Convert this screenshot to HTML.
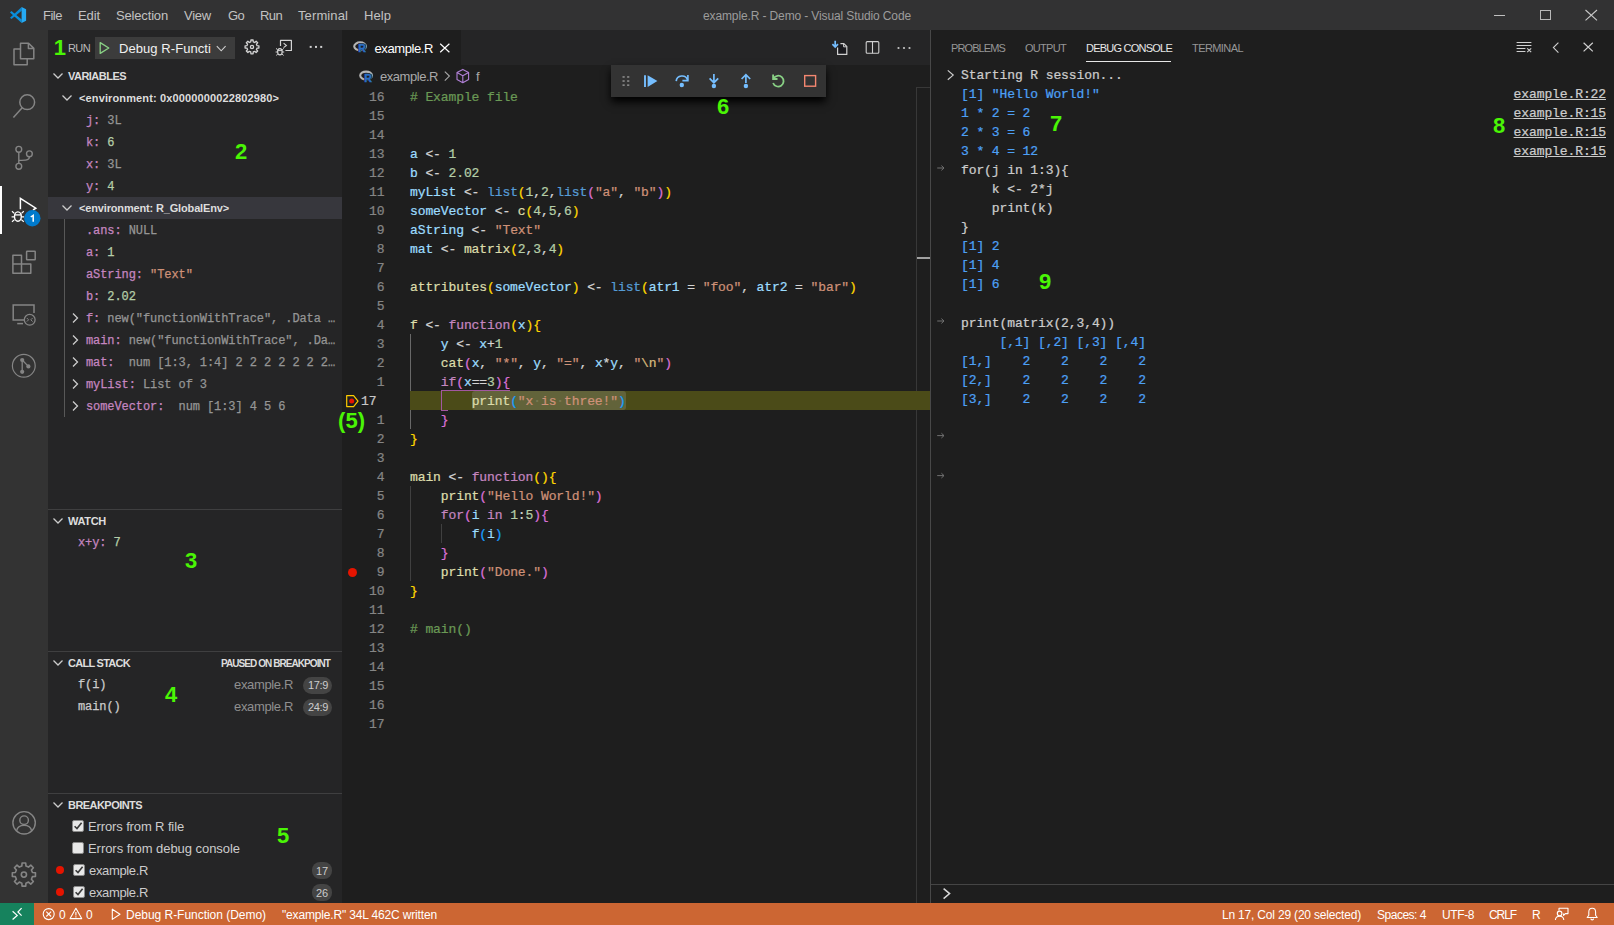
<!DOCTYPE html>
<html><head><meta charset="utf-8"><title>example.R - Demo - Visual Studio Code</title>
<style>

*{box-sizing:border-box;margin:0;padding:0}
html,body{width:1614px;height:925px;overflow:hidden;background:#1e1e1e;font-family:"Liberation Sans",sans-serif;}
.t{position:absolute;white-space:pre;font-family:"Liberation Sans",sans-serif;z-index:5}
.abs{position:absolute}
#title{left:0;top:0;width:1614px;height:30px;background:#323233}
#act{left:0;top:30px;width:48px;height:873px;background:#333333}
#side{left:48px;top:30px;width:294px;height:873px;background:#252526}
#tabs{left:342px;top:30px;width:588px;height:35px;background:#252526}
#tab{left:342px;top:30px;width:119px;height:35px;background:#1e1e1e}
#panel{left:930px;top:30px;width:684px;height:873px;background:#1e1e1e;border-left:1px solid #484848}
#status{left:0;top:903px;width:1614px;height:22px;background:#cc6633}
#remote{left:0;top:903px;width:34px;height:22px;background:#16825d}
.m{-webkit-text-stroke:0.24px;position:absolute;white-space:pre;padding-top:1px;font-family:"Liberation Mono",monospace;font-size:13px;letter-spacing:-0.1px;height:20px;line-height:19px;color:#d4d4d4;z-index:5}
.sm{-webkit-text-stroke:0.25px;position:absolute;white-space:pre;padding-top:1px;font-family:"Liberation Mono",monospace;font-size:12px;letter-spacing:-0.085px;height:23px;line-height:22px;color:#c586c0;z-index:5}
.f{color:#dcdcaa}.e{color:#d7ba7d}.c{color:#6a9955}.k{color:#c586c0}.b{color:#569cd6}.s{color:#ce9178}.n{color:#b5cea8}.v{color:#9cdcfe}
.p1{color:#ffd700}.p2{color:#da70d6}.p3{color:#179fff}
.o{color:#4da0f6}.ws{color:#7a7a55}
.vn{color:#b5cea8}.vs{color:#ce9178}.vd{color:#959595}
.hdr{position:absolute;left:48px;width:294px;height:1px;background:#3f3f40}
svg{position:absolute;overflow:visible}

</style></head><body>
<div class="abs" id="title"></div>
<div class="abs" id="act"></div>
<div class="abs" id="side"></div>
<div class="abs" id="tabs"></div>
<div class="abs" id="tab"></div>
<div class="abs" id="panel"></div>
<div class="abs" id="status"></div>
<div class="abs" id="remote"></div>
<div class="abs" style="left:95px;top:37px;width:140px;height:22px;background:#3c3c3c"></div>
<svg style="left:52.2px;top:70px" width="12" height="12" viewBox="0 0 12 12"><path d="M1.5 3.5 L6 8 L10.5 3.5" fill="none" stroke="#cccccc" stroke-width="1.3"/></svg>
<svg style="left:61px;top:92px" width="12" height="12" viewBox="0 0 12 12"><path d="M1.5 3.5 L6 8 L10.5 3.5" fill="none" stroke="#cccccc" stroke-width="1.3"/></svg>
<div class="abs" style="left:48px;top:197px;width:294px;height:22px;background:#37373d"></div>
<svg style="left:61px;top:202px" width="12" height="12" viewBox="0 0 12 12"><path d="M1.5 3.5 L6 8 L10.5 3.5" fill="none" stroke="#cccccc" stroke-width="1.3"/></svg>
<div class="abs" style="left:64px;top:219px;width:1px;height:198px;background:#585858"></div>
<div class="sm" style="left:86px;top:109px">j: <span class="vd">3L</span></div>
<div class="sm" style="left:86px;top:131px">k: <span class="vn">6</span></div>
<div class="sm" style="left:86px;top:153px">x: <span class="vd">3L</span></div>
<div class="sm" style="left:86px;top:175px">y: <span class="vn">4</span></div>
<div class="sm" style="left:86px;top:219px">.ans: <span class="vd">NULL</span></div>
<div class="sm" style="left:86px;top:241px">a: <span class="vn">1</span></div>
<div class="sm" style="left:86px;top:263px">aString: <span class="vs">&quot;Text&quot;</span></div>
<div class="sm" style="left:86px;top:285px">b: <span class="vn">2.02</span></div>
<div class="sm" style="left:86px;top:307px">f: <span class="vd">new(&quot;functionWithTrace&quot;, .Data …</span></div>
<div class="sm" style="left:86px;top:329px">main: <span class="vd">new(&quot;functionWithTrace&quot;, .Da…</span></div>
<div class="sm" style="left:86px;top:351px">mat: <span class="vd"> num [1:3, 1:4] 2 2 2 2 2 2 2…</span></div>
<div class="sm" style="left:86px;top:373px">myList: <span class="vd">List of 3</span></div>
<div class="sm" style="left:86px;top:395px">someVector: <span class="vd"> num [1:3] 4 5 6</span></div>
<svg style="left:69px;top:312px" width="12" height="12" viewBox="0 0 12 12"><path d="M4 1.5 L8.5 6 L4 10.5" fill="none" stroke="#cccccc" stroke-width="1.3"/></svg>
<svg style="left:69px;top:334px" width="12" height="12" viewBox="0 0 12 12"><path d="M4 1.5 L8.5 6 L4 10.5" fill="none" stroke="#cccccc" stroke-width="1.3"/></svg>
<svg style="left:69px;top:356px" width="12" height="12" viewBox="0 0 12 12"><path d="M4 1.5 L8.5 6 L4 10.5" fill="none" stroke="#cccccc" stroke-width="1.3"/></svg>
<svg style="left:69px;top:378px" width="12" height="12" viewBox="0 0 12 12"><path d="M4 1.5 L8.5 6 L4 10.5" fill="none" stroke="#cccccc" stroke-width="1.3"/></svg>
<svg style="left:69px;top:400px" width="12" height="12" viewBox="0 0 12 12"><path d="M4 1.5 L8.5 6 L4 10.5" fill="none" stroke="#cccccc" stroke-width="1.3"/></svg>
<div class="hdr" style="top:509px"></div>
<svg style="left:52.2px;top:515px" width="12" height="12" viewBox="0 0 12 12"><path d="M1.5 3.5 L6 8 L10.5 3.5" fill="none" stroke="#cccccc" stroke-width="1.3"/></svg>
<div class="sm" style="left:78px;top:531px">x+y: <span class="vn">7</span></div>
<div class="hdr" style="top:651px"></div>
<svg style="left:52.2px;top:657px" width="12" height="12" viewBox="0 0 12 12"><path d="M1.5 3.5 L6 8 L10.5 3.5" fill="none" stroke="#cccccc" stroke-width="1.3"/></svg>
<div class="sm" style="left:78px;top:673px;color:#cccccc">f(i)</div>
<div class="sm" style="left:78px;top:695px;color:#cccccc">main()</div>
<div class="abs" style="left:303px;top:676.5px;width:29px;height:17px;border-radius:8.5px;background:#444444"></div>
<div class="abs" style="left:303px;top:698.5px;width:29px;height:17px;border-radius:8.5px;background:#444444"></div>
<div class="hdr" style="top:793px"></div>
<svg style="left:52.2px;top:799px" width="12" height="12" viewBox="0 0 12 12"><path d="M1.5 3.5 L6 8 L10.5 3.5" fill="none" stroke="#cccccc" stroke-width="1.3"/></svg>
<div class="abs" style="left:72px;top:820px;width:12px;height:12px;background:#e8e8e8;border:1px solid #8a8a8a;border-radius:2px"></div>
<svg style="left:72px;top:820px" width="12" height="12" viewBox="0 0 12 12"><path d="M2.6 6.2 L5 8.6 L9.6 2.8" fill="none" stroke="#3a3a3a" stroke-width="1.6"/></svg>
<div class="abs" style="left:72px;top:842px;width:12px;height:12px;background:#e8e8e8;border:1px solid #8a8a8a;border-radius:2px"></div>
<div class="abs" style="left:55.5px;top:865.8px;width:8.6px;height:8.6px;border-radius:5px;background:#e51400"></div>
<div class="abs" style="left:73px;top:864px;width:12px;height:12px;background:#e8e8e8;border:1px solid #8a8a8a;border-radius:2px"></div>
<svg style="left:73px;top:864px" width="12" height="12" viewBox="0 0 12 12"><path d="M2.6 6.2 L5 8.6 L9.6 2.8" fill="none" stroke="#3a3a3a" stroke-width="1.6"/></svg>
<div class="abs" style="left:312px;top:862px;width:20px;height:17px;border-radius:8px;background:#444444"></div>
<div class="abs" style="left:55.5px;top:887.8px;width:8.6px;height:8.6px;border-radius:5px;background:#e51400"></div>
<div class="abs" style="left:73px;top:886px;width:12px;height:12px;background:#e8e8e8;border:1px solid #8a8a8a;border-radius:2px"></div>
<svg style="left:73px;top:886px" width="12" height="12" viewBox="0 0 12 12"><path d="M2.6 6.2 L5 8.6 L9.6 2.8" fill="none" stroke="#3a3a3a" stroke-width="1.6"/></svg>
<div class="abs" style="left:312px;top:884px;width:20px;height:17px;border-radius:8px;background:#444444"></div>
<div class="abs" style="left:410px;top:391px;width:520px;height:19px;background:#4b4b18;z-index:2"></div>
<div class="abs" style="left:472px;top:391px;width:154px;height:19px;background:#62633a;border-radius:3px;z-index:2"></div>
<div class="m" style="left:346px;top:87px;width:38.5px;text-align:right;color:#858585">16</div>
<div class="m" style="left:410px;top:87px"><span class="c"># Example file</span></div>
<div class="m" style="left:346px;top:106px;width:38.5px;text-align:right;color:#858585">15</div>
<div class="m" style="left:346px;top:125px;width:38.5px;text-align:right;color:#858585">14</div>
<div class="m" style="left:346px;top:144px;width:38.5px;text-align:right;color:#858585">13</div>
<div class="m" style="left:410px;top:144px"><span class="v">a</span> &lt;- <span class="n">1</span></div>
<div class="m" style="left:346px;top:163px;width:38.5px;text-align:right;color:#858585">12</div>
<div class="m" style="left:410px;top:163px"><span class="v">b</span> &lt;- <span class="n">2.02</span></div>
<div class="m" style="left:346px;top:182px;width:38.5px;text-align:right;color:#858585">11</div>
<div class="m" style="left:410px;top:182px"><span class="v">myList</span> &lt;- <span class="b">list</span><span class="p1">(</span><span class="n">1</span>,<span class="n">2</span>,<span class="b">list</span><span class="p2">(</span><span class="s">&quot;a&quot;</span>, <span class="s">&quot;b&quot;</span><span class="p2">)</span><span class="p1">)</span></div>
<div class="m" style="left:346px;top:201px;width:38.5px;text-align:right;color:#858585">10</div>
<div class="m" style="left:410px;top:201px"><span class="v">someVector</span> &lt;- <span class="f">c</span><span class="p1">(</span><span class="n">4</span>,<span class="n">5</span>,<span class="n">6</span><span class="p1">)</span></div>
<div class="m" style="left:346px;top:220px;width:38.5px;text-align:right;color:#858585">9</div>
<div class="m" style="left:410px;top:220px"><span class="v">aString</span> &lt;- <span class="s">&quot;Text&quot;</span></div>
<div class="m" style="left:346px;top:239px;width:38.5px;text-align:right;color:#858585">8</div>
<div class="m" style="left:410px;top:239px"><span class="v">mat</span> &lt;- <span class="f">matrix</span><span class="p1">(</span><span class="n">2</span>,<span class="n">3</span>,<span class="n">4</span><span class="p1">)</span></div>
<div class="m" style="left:346px;top:258px;width:38.5px;text-align:right;color:#858585">7</div>
<div class="m" style="left:346px;top:277px;width:38.5px;text-align:right;color:#858585">6</div>
<div class="m" style="left:410px;top:277px"><span class="f">attributes</span><span class="p1">(</span><span class="v">someVector</span><span class="p1">)</span> &lt;- <span class="b">list</span><span class="p1">(</span><span class="v">atr1</span> = <span class="s">&quot;foo&quot;</span>, <span class="v">atr2</span> = <span class="s">&quot;bar&quot;</span><span class="p1">)</span></div>
<div class="m" style="left:346px;top:296px;width:38.5px;text-align:right;color:#858585">5</div>
<div class="m" style="left:346px;top:315px;width:38.5px;text-align:right;color:#858585">4</div>
<div class="m" style="left:410px;top:315px"><span class="f">f</span> &lt;- <span class="k">function</span><span class="p1">(</span><span class="v">x</span><span class="p1">)</span><span class="p1">{</span></div>
<div class="m" style="left:346px;top:334px;width:38.5px;text-align:right;color:#858585">3</div>
<div class="m" style="left:410px;top:334px">    <span class="v">y</span> &lt;- <span class="v">x</span>+<span class="n">1</span></div>
<div class="m" style="left:346px;top:353px;width:38.5px;text-align:right;color:#858585">2</div>
<div class="m" style="left:410px;top:353px">    <span class="f">cat</span><span class="p2">(</span><span class="v">x</span>, <span class="s">&quot;*&quot;</span>, <span class="v">y</span>, <span class="s">&quot;=&quot;</span>, <span class="v">x</span>*<span class="v">y</span>, <span class="s">&quot;</span><span class="e">\n</span><span class="s">&quot;</span><span class="p2">)</span></div>
<div class="m" style="left:346px;top:372px;width:38.5px;text-align:right;color:#858585">1</div>
<div class="m" style="left:410px;top:372px">    <span class="k">if</span><span class="p2">(</span><span class="v">x</span>==<span class="n">3</span><span class="p2">)</span><span class="p2">{</span></div>
<div class="m" style="left:361px;top:391px;color:#c6c6c6">17</div>
<div class="m" style="left:410px;top:391px">        <span class="f">print</span><span class="p3">(</span><span class="s">&quot;x</span><span class="ws">·</span><span class="s">is</span><span class="ws">·</span><span class="s">three!&quot;</span><span class="p3">)</span></div>
<div class="m" style="left:346px;top:410px;width:38.5px;text-align:right;color:#858585">1</div>
<div class="m" style="left:410px;top:410px">    <span class="p2">}</span></div>
<div class="m" style="left:346px;top:429px;width:38.5px;text-align:right;color:#858585">2</div>
<div class="m" style="left:410px;top:429px"><span class="p1">}</span></div>
<div class="m" style="left:346px;top:448px;width:38.5px;text-align:right;color:#858585">3</div>
<div class="m" style="left:346px;top:467px;width:38.5px;text-align:right;color:#858585">4</div>
<div class="m" style="left:410px;top:467px"><span class="f">main</span> &lt;- <span class="k">function</span><span class="p1">(</span><span class="p1">)</span><span class="p1">{</span></div>
<div class="m" style="left:346px;top:486px;width:38.5px;text-align:right;color:#858585">5</div>
<div class="m" style="left:410px;top:486px">    <span class="f">print</span><span class="p2">(</span><span class="s">&quot;Hello World!&quot;</span><span class="p2">)</span></div>
<div class="m" style="left:346px;top:505px;width:38.5px;text-align:right;color:#858585">6</div>
<div class="m" style="left:410px;top:505px">    <span class="k">for</span><span class="p2">(</span><span class="v">i</span> <span class="k">in</span> <span class="n">1</span>:<span class="n">5</span><span class="p2">)</span><span class="p2">{</span></div>
<div class="m" style="left:346px;top:524px;width:38.5px;text-align:right;color:#858585">7</div>
<div class="m" style="left:410px;top:524px">        <span class="v">f</span><span class="p3">(</span><span class="v">i</span><span class="p3">)</span></div>
<div class="m" style="left:346px;top:543px;width:38.5px;text-align:right;color:#858585">8</div>
<div class="m" style="left:410px;top:543px">    <span class="p2">}</span></div>
<div class="m" style="left:346px;top:562px;width:38.5px;text-align:right;color:#858585">9</div>
<div class="m" style="left:410px;top:562px">    <span class="f">print</span><span class="p2">(</span><span class="s">&quot;Done.&quot;</span><span class="p2">)</span></div>
<div class="m" style="left:346px;top:581px;width:38.5px;text-align:right;color:#858585">10</div>
<div class="m" style="left:410px;top:581px"><span class="p1">}</span></div>
<div class="m" style="left:346px;top:600px;width:38.5px;text-align:right;color:#858585">11</div>
<div class="m" style="left:346px;top:619px;width:38.5px;text-align:right;color:#858585">12</div>
<div class="m" style="left:410px;top:619px"><span class="c"># main()</span></div>
<div class="m" style="left:346px;top:638px;width:38.5px;text-align:right;color:#858585">13</div>
<div class="m" style="left:346px;top:657px;width:38.5px;text-align:right;color:#858585">14</div>
<div class="m" style="left:346px;top:676px;width:38.5px;text-align:right;color:#858585">15</div>
<div class="m" style="left:346px;top:695px;width:38.5px;text-align:right;color:#858585">16</div>
<div class="m" style="left:346px;top:714px;width:38.5px;text-align:right;color:#858585">17</div>
<div class="abs" style="left:410px;top:334px;width:1px;height:95px;background:#686868"></div>
<div class="abs" style="left:410px;top:486px;width:1px;height:95px;background:#404040"></div>
<div class="abs" style="left:441px;top:524px;width:1px;height:19px;background:#404040"></div>
<div class="abs" style="left:441px;top:390px;width:69px;height:1px;background:#a257a0;z-index:3"></div>
<div class="abs" style="left:441px;top:390px;width:1px;height:20px;background:#a257a0;z-index:3"></div>
<div class="abs" style="left:441px;top:410px;width:7px;height:1px;background:#a257a0;z-index:3"></div>
<div class="abs" style="left:347.5px;top:567.5px;width:9px;height:9px;border-radius:5px;background:#e51400"></div>
<div class="abs" style="left:916px;top:87px;width:1px;height:816px;background:#383838"></div>
<div class="abs" style="left:916px;top:87px;width:14px;height:1px;background:#383838"></div>
<div class="abs" style="left:917px;top:257px;width:13px;height:2px;background:#a0a0a0"></div>
<div class="abs" style="left:611px;top:65px;width:215px;height:32px;background:#333333;box-shadow:0 5px 8px #000"></div>
<div class="abs" style="left:1086px;top:61px;width:85px;height:1px;background:#e7e7e7"></div>
<div class="m " style="left:961px;top:65px;color:#cccccc">Starting R session...</div>
<div class="m o" style="left:961px;top:84px">[1] &quot;Hello World!&quot;</div>
<div class="m o" style="left:961px;top:103px">1 * 2 = 2</div>
<div class="m o" style="left:961px;top:122px">2 * 3 = 6</div>
<div class="m o" style="left:961px;top:141px">3 * 4 = 12</div>
<div class="m " style="left:961px;top:160px;color:#cccccc">for(j in 1:3){</div>
<div class="m " style="left:961px;top:179px;color:#cccccc">    k &lt;- 2*j</div>
<div class="m " style="left:961px;top:198px;color:#cccccc">    print(k)</div>
<div class="m " style="left:961px;top:217px;color:#cccccc">}</div>
<div class="m o" style="left:961px;top:236px">[1] 2</div>
<div class="m o" style="left:961px;top:255px">[1] 4</div>
<div class="m o" style="left:961px;top:274px">[1] 6</div>
<div class="m " style="left:961px;top:313px;color:#cccccc">print(matrix(2,3,4))</div>
<div class="m o" style="left:961px;top:332px">     [,1] [,2] [,3] [,4]</div>
<div class="m o" style="left:961px;top:351px">[1,]    2    2    2    2</div>
<div class="m o" style="left:961px;top:370px">[2,]    2    2    2    2</div>
<div class="m o" style="left:961px;top:389px">[3,]    2    2    2    2</div>
<div class="m" style="left:1506px;width:100px;text-align:right;top:84px;color:#cccccc;text-decoration:underline">example.R:22</div>
<div class="m" style="left:1506px;width:100px;text-align:right;top:103px;color:#cccccc;text-decoration:underline">example.R:15</div>
<div class="m" style="left:1506px;width:100px;text-align:right;top:122px;color:#cccccc;text-decoration:underline">example.R:15</div>
<div class="m" style="left:1506px;width:100px;text-align:right;top:141px;color:#cccccc;text-decoration:underline">example.R:15</div>
<div class="abs" style="left:931px;top:884px;width:683px;height:1px;background:#454545"></div>
<svg class="ov" style="left:0;top:0;z-index:6" width="1614" height="925" viewBox="0 0 1614 925"><path d="M21.7 7.1 L21.7 10.7 L11.5 19.1 L10 17.7 Z" stroke="none" fill="#078bd8" stroke-width="1.2" />
<path d="M11.4 11 L21.7 19.4 L21.7 23.1 L10 12.4 Z" stroke="none" fill="#0a90de" stroke-width="1.2" />
<path d="M21.6 7.1 L26.1 9.2 V20.8 L21.6 23.1 Z" stroke="none" fill="#25a9f3" stroke-width="1.2" />
<path d="M1494 15.5 H1505" stroke="#c0c0c0" fill="none" stroke-width="1" />
<rect x="1540.5" y="10.5" width="10" height="9" rx="0" stroke="#b8b8b8" fill="none" stroke-width="1" />
<path d="M1585.5 10 L1597 20.3 M1597 10 L1585.5 20.3" stroke="#c8c8c8" fill="none" stroke-width="1.1" />
<path d="M20.5 43.2 H28.6 L33.8 48.4 V58.8 H20.5 Z M28.4 43.4 V48.6 H33.6" stroke="#858585" fill="none" stroke-width="1.5" stroke-linejoin="round"/>
<path d="M20.3 49 H14 V64.8 H27.2 V59" stroke="#858585" fill="none" stroke-width="1.5" stroke-linejoin="round"/>
<circle cx="27.2" cy="102.2" r="7.4" stroke="#858585" fill="none" stroke-width="1.5" />
<path d="M22.2 107.8 L13.4 117.6" stroke="#858585" fill="none" stroke-width="1.5" />
<circle cx="18.8" cy="149.3" r="2.9" stroke="#858585" fill="none" stroke-width="1.4" />
<circle cx="18.8" cy="166.3" r="2.9" stroke="#858585" fill="none" stroke-width="1.4" />
<circle cx="29.4" cy="153.8" r="2.9" stroke="#858585" fill="none" stroke-width="1.4" />
<path d="M18.8 152.2 V163.4 M29.4 156.7 C29.4 160.4 25.5 160.4 18.8 160.4" stroke="#858585" fill="none" stroke-width="1.4" />
<rect x="0" y="186" width="2" height="48" rx="0" stroke="none" fill="#ffffff" stroke-width="1.2" />
<path d="M20.4 209.2 V198.4 L35.8 208.2 L33 210" stroke="#ffffff" fill="none" stroke-width="1.5" stroke-linejoin="miter"/>
<ellipse cx="17.9" cy="216.6" rx="3.4" ry="4.7" stroke="#fff" fill="none" stroke-width="1.4"/>
<path d="M14.4 214.9 H21.4" stroke="#fff" fill="none" stroke-width="1.3" />
<path d="M14.3 213.4 L12 211.2 M21.5 213.4 L23.8 211.2 M14 216.8 H11.6 M21.8 216.8 H24.2 M14.5 219.6 L12 221.8 M21.3 219.6 L23.8 221.8" stroke="#fff" fill="none" stroke-width="1.2" />
<circle cx="32.3" cy="218.2" r="8.2" stroke="none" fill="#007acc" stroke-width="1.2" />
<path d="M30.7 217 L33.2 215.3 V221.8" stroke="#ffffff" fill="none" stroke-width="1.5" stroke-linejoin="miter"/>
<path d="M12.9 255.3 H21.5 V264 H30.8 V273.2 H12.9 Z M12.9 264 H21.5 V273.2" stroke="#858585" fill="none" stroke-width="1.5" stroke-linejoin="round"/>
<rect x="26.6" y="251.2" width="8.6" height="8.6" rx="0.5" stroke="#858585" fill="none" stroke-width="1.5" />
<path d="M24 320 H13.2 V305 H34 V313" stroke="#858585" fill="none" stroke-width="1.5" />
<path d="M17.2 323.6 H23" stroke="#858585" fill="none" stroke-width="1.5" />
<circle cx="29.7" cy="319.8" r="5.4" stroke="#858585" fill="#333333" stroke-width="1.3" />
<path d="M26.8 318 L28.6 319.8 L26.8 321.6 M32.6 318 L30.8 319.8 L32.6 321.6" stroke="#858585" fill="none" stroke-width="1" />
<circle cx="23.8" cy="365.8" r="11.4" stroke="#858585" fill="none" stroke-width="1.2" />
<circle cx="22.2" cy="360" r="2.1" stroke="none" fill="#858585" stroke-width="1.2" />
<circle cx="28.4" cy="366.4" r="2.1" stroke="none" fill="#858585" stroke-width="1.2" />
<circle cx="22.2" cy="371.8" r="2.1" stroke="none" fill="#858585" stroke-width="1.2" />
<path d="M22.2 360 V371.8 M22.2 360 L28.4 366.4" stroke="#858585" fill="none" stroke-width="1.3" />
<circle cx="24.1" cy="822.8" r="11.2" stroke="#858585" fill="none" stroke-width="1.4" />
<circle cx="24.1" cy="820.2" r="4.3" stroke="#858585" fill="none" stroke-width="1.4" />
<path d="M16.6 830.8 C17.4 826.6 20.5 825.4 24.1 825.4 C27.7 825.4 30.8 826.6 31.6 830.8" stroke="#858585" fill="none" stroke-width="1.4" />
<path d="M21.85 866.04 L22.07 863.04 L25.73 863.04 L25.95 866.04 L28.50 867.10 L30.78 865.13 L33.37 867.72 L31.40 870.00 L32.46 872.55 L35.46 872.77 L35.46 876.43 L32.46 876.65 L31.40 879.20 L33.37 881.48 L30.78 884.07 L28.50 882.10 L25.95 883.16 L25.73 886.16 L22.07 886.16 L21.85 883.16 L19.30 882.10 L17.02 884.07 L14.43 881.48 L16.40 879.20 L15.34 876.65 L12.34 876.43 L12.34 872.77 L15.34 872.55 L16.40 870.00 L14.43 867.72 L17.02 865.13 L19.30 867.10 Z" stroke="#858585" fill="none" stroke-width="1.6" stroke-linejoin="round"/>
<circle cx="23.9" cy="874.6" r="2.6" stroke="#858585" fill="none" stroke-width="1.6" />
<path d="M12.6 911.3 L17.2 915.4 L12.6 919.5 M21.6 908.1 L17.9 912 L21.6 915.7" stroke="#ffffff" fill="none" stroke-width="1.2" />
<circle cx="48.7" cy="914.1" r="5.5" stroke="#ffffff" fill="none" stroke-width="1.1" />
<path d="M46.3 911.7 L51.1 916.5 M51.1 911.7 L46.3 916.5" stroke="#ffffff" fill="none" stroke-width="1.1" />
<path d="M75.9 908.3 L81.7 918.6 H70.1 Z" stroke="#ffffff" fill="none" stroke-width="1.1" stroke-linejoin="round"/>
<path d="M75.9 912 V915.4 M75.9 916.3 V917.5" stroke="#ffffff" fill="none" stroke-width="1.1" />
<path d="M112.3 909.2 V919.4 L120 914.3 Z" stroke="#ffffff" fill="none" stroke-width="1.1" stroke-linejoin="round"/>
<circle cx="1559.6" cy="913.4" r="2.3" stroke="#ffffff" fill="none" stroke-width="1.1" />
<path d="M1555.4 920 C1555.6 917 1557.4 916.2 1559.6 916.2 C1561.8 916.2 1563.6 917 1563.8 920" stroke="#ffffff" fill="none" stroke-width="1.1" />
<path d="M1559 910.4 V908.2 H1568 V913.6 H1565.4 L1563.6 915.4 V913.6" stroke="#ffffff" fill="none" stroke-width="1.1" stroke-linejoin="round"/>
<path d="M1587.2 917.5 L1588.8 915.2 V912 C1588.8 906.9 1595.6 906.9 1595.6 912 V915.2 L1597.2 917.5 Z M1590.8 918.6 C1591 920.3 1593.4 920.3 1593.6 918.6" stroke="#ffffff" fill="none" stroke-width="1.1" stroke-linejoin="round"/>
<path d="M100.2 42.6 V53.4 L108.8 48 Z" stroke="#89d185" fill="none" stroke-width="1.3" stroke-linejoin="round"/>
<path d="M216.8 46.2 L221.2 50.8 L225.6 46.2" stroke="#d0d0d0" fill="none" stroke-width="1.1" />
<path d="M250.79 41.84 L250.90 39.99 L253.10 39.99 L253.21 41.84 L254.72 42.47 L256.11 41.24 L257.66 42.79 L256.43 44.18 L257.06 45.69 L258.91 45.80 L258.91 48.00 L257.06 48.11 L256.43 49.62 L257.66 51.01 L256.11 52.56 L254.72 51.33 L253.21 51.96 L253.10 53.81 L250.90 53.81 L250.79 51.96 L249.28 51.33 L247.89 52.56 L246.34 51.01 L247.57 49.62 L246.94 48.11 L245.09 48.00 L245.09 45.80 L246.94 45.69 L247.57 44.18 L246.34 42.79 L247.89 41.24 L249.28 42.47 Z" stroke="#d4d4d4" fill="none" stroke-width="1.3" stroke-linejoin="round"/>
<circle cx="252" cy="46.9" r="1.6" stroke="#d4d4d4" fill="none" stroke-width="1.3" />
<path d="M280.5 46 V40.4 H291.4 V50.5 H285.4" stroke="#d4d4d4" fill="none" stroke-width="1.2" stroke-linejoin="round"/>
<path d="M283.6 43.2 L286.4 45.4 L283.6 47.6" stroke="#d4d4d4" fill="none" stroke-width="1.1" />
<ellipse cx="279.9" cy="51.8" rx="2.3" ry="3.1" stroke="#d4d4d4" fill="#252526" stroke-width="1.2"/><path d="M277.7 50.6 H282.1" stroke="#d4d4d4" stroke-width="1"/>
<path d="M277.6 49.8 L276 48.4 M282.2 49.8 L283.8 48.4 M277.4 52 H275.6 M282.4 52 H284.2 M277.8 54 L276.2 55.4 M282 54 L283.6 55.4" stroke="#d4d4d4" fill="none" stroke-width="1" />
<rect x="309.7" y="45.9" width="2" height="2" rx="0" stroke="none" fill="#d0d0d0" stroke-width="1.2" />
<rect x="315" y="45.9" width="2" height="2" rx="0" stroke="none" fill="#d0d0d0" stroke-width="1.2" />
<rect x="320.2" y="45.9" width="2" height="2" rx="0" stroke="none" fill="#d0d0d0" stroke-width="1.2" />
<ellipse cx="360.1" cy="46.3" rx="5.9" ry="3.9" stroke="#b4b4b4" fill="none" stroke-width="2.1"/>
<text x="358.3" y="52.3" font-family="Liberation Sans, sans-serif" font-size="10.6" font-weight="bold" fill="#1e1e1e" stroke="#1e1e1e" stroke-width="1.6">R</text>
<text x="358.3" y="52.3" font-family="Liberation Sans, sans-serif" font-size="10.6" font-weight="bold" fill="#2a6fc4" stroke="#2a6fc4" stroke-width="0.5">R</text>
<ellipse cx="366.1" cy="75.5" rx="5.9" ry="3.9" stroke="#b4b4b4" fill="none" stroke-width="2.1"/>
<text x="364.3" y="81.5" font-family="Liberation Sans, sans-serif" font-size="10.6" font-weight="bold" fill="#1e1e1e" stroke="#1e1e1e" stroke-width="1.6">R</text>
<text x="364.3" y="81.5" font-family="Liberation Sans, sans-serif" font-size="10.6" font-weight="bold" fill="#2a6fc4" stroke="#2a6fc4" stroke-width="0.5">R</text>
<path d="M440.2 43.8 L449.4 52.2 M449.4 43.8 L440.2 52.2" stroke="#ffffff" fill="none" stroke-width="1.2" />
<path d="M444.8 71.6 L449.4 76.1 L444.8 80.6" stroke="#a9a9a9" fill="none" stroke-width="1.1" />
<path d="M462.8 69.4 L468.6 72.6 V79.6 L462.8 82.8 L457 79.6 V72.6 Z M457 72.6 L462.8 75.8 L468.6 72.6 M462.8 75.8 V82.8" stroke="#b180d7" fill="none" stroke-width="1.1" stroke-linejoin="round"/>
<path d="M837.6 47.4 V54.4 H846.8 V46.6 L843.8 43.6 H840.4" stroke="#d0d0d0" fill="#1a1a1e" stroke-width="1.2" />
<path d="M843.6 43.8 V46.8 H846.6" stroke="#d0d0d0" fill="none" stroke-width="1" />
<path d="M835.2 40.8 V46.8 M832.4 44.2 L835.2 47 L838 44.2" stroke="#75beff" fill="none" stroke-width="1.7" />
<rect x="866.2" y="41.6" width="12.6" height="11.6" rx="1" stroke="#d0d0d0" fill="none" stroke-width="1.1" />
<path d="M872.5 41.6 V53.2" stroke="#d0d0d0" fill="none" stroke-width="1.1" />
<circle cx="898.5" cy="48" r="1.1" stroke="none" fill="#c5c5c5" stroke-width="1.2" />
<circle cx="904" cy="48" r="1.1" stroke="none" fill="#c5c5c5" stroke-width="1.2" />
<circle cx="909.5" cy="48" r="1.1" stroke="none" fill="#c5c5c5" stroke-width="1.2" />
<rect x="622.5" y="76.1" width="2.2" height="1.7" rx="0" stroke="none" fill="#858585" stroke-width="1.2" />
<rect x="622.5" y="80.19999999999999" width="2.2" height="1.7" rx="0" stroke="none" fill="#858585" stroke-width="1.2" />
<rect x="622.5" y="84.3" width="2.2" height="1.7" rx="0" stroke="none" fill="#858585" stroke-width="1.2" />
<rect x="627.1" y="76.1" width="2.2" height="1.7" rx="0" stroke="none" fill="#858585" stroke-width="1.2" />
<rect x="627.1" y="80.19999999999999" width="2.2" height="1.7" rx="0" stroke="none" fill="#858585" stroke-width="1.2" />
<rect x="627.1" y="84.3" width="2.2" height="1.7" rx="0" stroke="none" fill="#858585" stroke-width="1.2" />
<path d="M645 75.2 V87" stroke="#75beff" fill="none" stroke-width="1.9" />
<path d="M647.6 75.2 L657.4 81.1 L647.6 87 Z" stroke="none" fill="#75beff" stroke-width="1.2" />
<path d="M676.2 81.2 C676.8 74.8 685.8 74.2 687.6 80" stroke="#75beff" fill="none" stroke-width="1.7" />
<path d="M687.9 75 V80.6 H682.4" stroke="#75beff" fill="none" stroke-width="1.6" />
<circle cx="681.8" cy="85" r="2.2" stroke="none" fill="#75beff" stroke-width="1.2" />
<path d="M713.9 74 V82.4 M709.6 78.4 L713.9 82.7 L718.2 78.4" stroke="#75beff" fill="none" stroke-width="1.7" />
<circle cx="713.9" cy="86" r="2.2" stroke="none" fill="#75beff" stroke-width="1.2" />
<path d="M745.9 83 V74.8 M741.6 79 L745.9 74.7 L750.2 79" stroke="#75beff" fill="none" stroke-width="1.7" />
<circle cx="745.9" cy="86" r="2.2" stroke="none" fill="#75beff" stroke-width="1.2" />
<path d="M773.5 78.4 A5.4 5.4 0 1 1 773.1 83" stroke="#89d185" fill="none" stroke-width="1.8" />
<path d="M773.1 74.6 V79 H777.5" stroke="#89d185" fill="none" stroke-width="1.8" />
<rect x="804.7" y="75.6" width="10.9" height="10.6" rx="0" stroke="#f48771" fill="none" stroke-width="1.4" />
<path d="M346.7 395.6 H353.6 L358 401.1 L353.6 406.6 H346.7 Z" stroke="#ffcc00" fill="none" stroke-width="1.2" stroke-linejoin="round"/>
<circle cx="351.7" cy="401.1" r="2.5" stroke="none" fill="#e51400" stroke-width="1.2" />
<path d="M1516.6 42.5 H1531.4 M1516.6 45.5 H1531.4 M1516.6 48.5 H1525.4 M1516.6 51.5 H1525.4" stroke="#d0d0d0" fill="none" stroke-width="1" />
<path d="M1527.2 48.4 L1531.2 52.2 M1531.2 48.4 L1527.2 52.2" stroke="#d0d0d0" fill="none" stroke-width="1.1" />
<path d="M1558.4 42.6 L1553.4 47.6 L1558.4 52.6" stroke="#d0d0d0" fill="none" stroke-width="1.1" />
<path d="M1583.6 42.8 L1592.8 51.4 M1592.8 42.8 L1583.6 51.4" stroke="#d0d0d0" fill="none" stroke-width="1.2" />
<path d="M947.8 70.4 L953.2 75.1 L947.8 79.8" stroke="#cccccc" fill="none" stroke-width="1.2" />
<path d="M943.6 888.6 L949.6 893.6 L943.6 898.6" stroke="#d8d8d8" fill="none" stroke-width="1.5" />
<path d="M937.2 168 H944 M941.4 165.6 L944 168 L941.4 170.4" stroke="#707070" fill="none" stroke-width="1" />
<path d="M937.2 321 H944 M941.4 318.6 L944 321 L941.4 323.4" stroke="#707070" fill="none" stroke-width="1" />
<path d="M937.2 435.6 H944 M941.4 433.20000000000005 L944 435.6 L941.4 438.0" stroke="#707070" fill="none" stroke-width="1" />
<path d="M937.2 475.6 H944 M941.4 473.20000000000005 L944 475.6 L941.4 478.0" stroke="#707070" fill="none" stroke-width="1" /></svg>
<span class="t" id="t0" style="left:43px;top:1.0px;height:30px;line-height:30px;font-size:13px;color:#c2c2c2;letter-spacing:-0.488px;">File</span>
<span class="t" id="t1" style="left:78px;top:1.0px;height:30px;line-height:30px;font-size:13px;color:#c2c2c2;letter-spacing:-0.102px;">Edit</span>
<span class="t" id="t2" style="left:116px;top:1.0px;height:30px;line-height:30px;font-size:13px;color:#c2c2c2;letter-spacing:-0.165px;">Selection</span>
<span class="t" id="t3" style="left:184px;top:1.0px;height:30px;line-height:30px;font-size:13px;color:#c2c2c2;letter-spacing:-0.238px;">View</span>
<span class="t" id="t4" style="left:228px;top:1.0px;height:30px;line-height:30px;font-size:13px;color:#c2c2c2;letter-spacing:-0.672px;">Go</span>
<span class="t" id="t5" style="left:260px;top:1.0px;height:30px;line-height:30px;font-size:13px;color:#c2c2c2;letter-spacing:-0.620px;">Run</span>
<span class="t" id="t6" style="left:298px;top:1.0px;height:30px;line-height:30px;font-size:13px;color:#c2c2c2;letter-spacing:0.109px;">Terminal</span>
<span class="t" id="t7" style="left:364px;top:1.0px;height:30px;line-height:30px;font-size:13px;color:#c2c2c2;letter-spacing:0.062px;">Help</span>
<span class="t" id="t8" style="left:703px;top:1.0px;height:30px;line-height:30px;font-size:12px;color:#9c9c9c;letter-spacing:-0.123px;">example.R - Demo - Visual Studio Code</span>
<span class="t" id="t9" style="left:68px;top:37.5px;height:20px;line-height:20px;font-size:11px;color:#bbbbbb;letter-spacing:-0.615px;">RUN</span>
<span class="t" id="t10" style="left:119px;top:38.5px;height:20px;line-height:20px;font-size:13px;color:#f0f0f0;letter-spacing:0.068px;">Debug R-Functi</span>
<span class="t" id="t11" style="left:68px;top:65.0px;height:22px;line-height:22px;font-size:11px;color:#dddddd;font-weight:bold;letter-spacing:-0.528px;">VARIABLES</span>
<span class="t" id="t12" style="left:79px;top:87.0px;height:22px;line-height:22px;font-size:11px;color:#dddddd;font-weight:bold;letter-spacing:0.130px;">&lt;environment: 0x0000000022802980&gt;</span>
<span class="t" id="t13" style="left:79px;top:197.0px;height:22px;line-height:22px;font-size:11px;color:#dddddd;font-weight:bold;letter-spacing:-0.156px;">&lt;environment: R_GlobalEnv&gt;</span>
<span class="t" id="t14" style="left:68px;top:510.0px;height:22px;line-height:22px;font-size:11px;color:#dddddd;font-weight:bold;letter-spacing:-0.303px;">WATCH</span>
<span class="t" id="t15" style="left:68px;top:652.0px;height:22px;line-height:22px;font-size:11px;color:#dddddd;font-weight:bold;letter-spacing:-0.727px;">CALL STACK</span>
<span class="t" id="t16" style="left:221px;top:653.0px;height:22px;line-height:22px;font-size:10px;color:#dddddd;font-weight:bold;letter-spacing:-0.930px;">PAUSED ON BREAKPOINT</span>
<span class="t" id="t17" style="left:234px;top:674.0px;height:22px;line-height:22px;font-size:13px;color:#8f8f8f;letter-spacing:-0.349px;">example.R</span>
<span class="t" id="t18" style="left:308px;top:677.0px;height:16px;line-height:16px;font-size:11px;color:#cccccc;letter-spacing:-0.355px;">17:9</span>
<span class="t" id="t19" style="left:234px;top:696.0px;height:22px;line-height:22px;font-size:13px;color:#8f8f8f;letter-spacing:-0.349px;">example.R</span>
<span class="t" id="t20" style="left:308px;top:699.0px;height:16px;line-height:16px;font-size:11px;color:#cccccc;letter-spacing:-0.355px;">24:9</span>
<span class="t" id="t21" style="left:68px;top:794.0px;height:22px;line-height:22px;font-size:11px;color:#dddddd;font-weight:bold;letter-spacing:-0.551px;">BREAKPOINTS</span>
<span class="t" id="t22" style="left:88px;top:816.0px;height:22px;line-height:22px;font-size:13px;color:#cccccc;letter-spacing:-0.124px;">Errors from R file</span>
<span class="t" id="t23" style="left:88px;top:838.0px;height:22px;line-height:22px;font-size:13px;color:#cccccc;letter-spacing:-0.048px;">Errors from debug console</span>
<span class="t" id="t24" style="left:89px;top:860.0px;height:22px;line-height:22px;font-size:13px;color:#cccccc;letter-spacing:-0.349px;">example.R</span>
<span class="t" id="t25" style="left:316px;top:862.5px;height:16px;line-height:16px;font-size:11px;color:#cccccc;letter-spacing:-0.125px;">17</span>
<span class="t" id="t26" style="left:89px;top:882.0px;height:22px;line-height:22px;font-size:13px;color:#cccccc;letter-spacing:-0.349px;">example.R</span>
<span class="t" id="t27" style="left:316px;top:884.5px;height:16px;line-height:16px;font-size:11px;color:#cccccc;letter-spacing:-0.125px;">26</span>
<span class="t" id="t28" style="left:235.0px;top:137.4px;height:30px;line-height:30px;font-size:22px;color:#4af505;font-weight:bold;">2</span>
<span class="t" id="t29" style="left:185.0px;top:546.4px;height:30px;line-height:30px;font-size:22px;color:#4af505;font-weight:bold;">3</span>
<span class="t" id="t30" style="left:164.9px;top:680.0px;height:30px;line-height:30px;font-size:22px;color:#4af505;font-weight:bold;">4</span>
<span class="t" id="t31" style="left:276.9px;top:821.0px;height:30px;line-height:30px;font-size:22px;color:#4af505;font-weight:bold;">5</span>
<span class="t" id="t32" style="left:338.1px;top:406.0px;height:30px;line-height:30px;font-size:22px;color:#4af505;font-weight:bold;">(5)</span>
<span class="t" id="t33" style="left:717.1px;top:91.5px;height:30px;line-height:30px;font-size:22px;color:#4af505;font-weight:bold;">6</span>
<span class="t" id="t34" style="left:1050.0px;top:108.6px;height:30px;line-height:30px;font-size:22px;color:#4af505;font-weight:bold;">7</span>
<span class="t" id="t35" style="left:1493.0px;top:110.5px;height:30px;line-height:30px;font-size:22px;color:#4af505;font-weight:bold;">8</span>
<span class="t" id="t36" style="left:1039.0px;top:266.6px;height:30px;line-height:30px;font-size:22px;color:#4af505;font-weight:bold;">9</span>
<span class="t" id="t37" style="left:53.7px;top:33.3px;height:30px;line-height:30px;font-size:22px;color:#4af505;font-weight:bold;">1</span>
<span class="t" id="t38" style="left:374.5px;top:39.0px;height:20px;line-height:20px;font-size:13px;color:#ffffff;letter-spacing:-0.405px;">example.R</span>
<span class="t" id="t39" style="left:380px;top:67.0px;height:20px;line-height:20px;font-size:13px;color:#a9a9a9;letter-spacing:-0.460px;">example.R</span>
<span class="t" id="t40" style="left:476px;top:67.0px;height:20px;line-height:20px;font-size:13px;color:#a9a9a9;letter-spacing:1.375px;">f</span>
<span class="t" id="t41" style="left:951px;top:38.0px;height:20px;line-height:20px;font-size:11px;color:#969696;letter-spacing:-0.893px;">PROBLEMS</span>
<span class="t" id="t42" style="left:1025px;top:38.0px;height:20px;line-height:20px;font-size:11px;color:#969696;letter-spacing:-0.706px;">OUTPUT</span>
<span class="t" id="t43" style="left:1086px;top:38.0px;height:20px;line-height:20px;font-size:11px;color:#e7e7e7;letter-spacing:-0.767px;">DEBUG CONSOLE</span>
<span class="t" id="t44" style="left:1192px;top:38.0px;height:20px;line-height:20px;font-size:11px;color:#969696;letter-spacing:-0.578px;">TERMINAL</span>
<span class="t" id="t45" style="left:59px;top:904.0px;height:22px;line-height:22px;font-size:12px;color:#ffffff;letter-spacing:0.312px;">0</span>
<span class="t" id="t46" style="left:86px;top:904.0px;height:22px;line-height:22px;font-size:12px;color:#ffffff;letter-spacing:0.312px;">0</span>
<span class="t" id="t47" style="left:126px;top:904.0px;height:22px;line-height:22px;font-size:12px;color:#ffffff;letter-spacing:-0.031px;">Debug R-Function (Demo)</span>
<span class="t" id="t48" style="left:282px;top:904.0px;height:22px;line-height:22px;font-size:12px;color:#ffffff;letter-spacing:-0.161px;">&quot;example.R&quot; 34L 462C written</span>
<span class="t" id="t49" style="left:1222px;top:904.0px;height:22px;line-height:22px;font-size:12px;color:#ffffff;letter-spacing:-0.189px;">Ln 17, Col 29 (20 selected)</span>
<span class="t" id="t50" style="left:1377px;top:904.0px;height:22px;line-height:22px;font-size:12px;color:#ffffff;letter-spacing:-0.486px;">Spaces: 4</span>
<span class="t" id="t51" style="left:1442px;top:904.0px;height:22px;line-height:22px;font-size:12px;color:#ffffff;letter-spacing:-0.400px;">UTF-8</span>
<span class="t" id="t52" style="left:1489px;top:904.0px;height:22px;line-height:22px;font-size:12px;color:#ffffff;letter-spacing:-1.086px;">CRLF</span>
<span class="t" id="t53" style="left:1532px;top:904.0px;height:22px;line-height:22px;font-size:12px;color:#ffffff;letter-spacing:-1.672px;">R</span>
</body></html>
